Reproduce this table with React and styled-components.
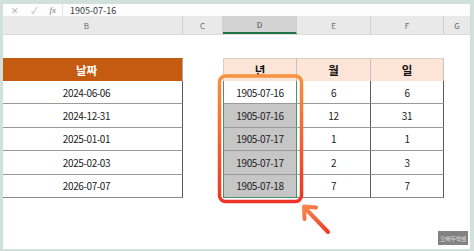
import React from 'react';
import styled, { createGlobalStyle } from 'styled-components';

const GlobalStyle = createGlobalStyle`
  html, body {
    margin: 0;
    padding: 0;
    background: #fff;
  }
  body {
    font-family: 'Noto Sans CJK KR', 'Noto Sans', sans-serif;
  }
`;

// column B runs off the left edge of the screenshot
const COLS = '192px 40px 74px 74px 73px 26px';

const Frame = styled.div`
  position: relative;
  width: 474px;
  height: 251px;
  box-sizing: border-box;
  border-style: solid;
  border-color: #cfe1da;
  border-width: 4px 4px 2px 3px;
  background: #fff;
  display: flex;
  flex-direction: column;
  overflow: hidden;
`;

const Viewport = styled.div`
  flex: 1;
  display: flex;
  flex-direction: column;
  overflow: hidden;
`;

const FormulaBar = styled.div`
  height: 12px;
  display: flex;
  align-items: center;
  background: #fdfdfd;
  font-size: 9px;
  color: #333;
`;

const FxTools = styled.div`
  width: 60px;
  display: flex;
  align-items: center;
  justify-content: space-around;
  padding-left: 2px;
  color: #b5b5b5;
  border-right: 1px solid #e2e2e2;
  height: 100%;
  box-sizing: border-box;
  > span {
    font-size: 9px;
    line-height: 1;
  }
  > i {
    font-family: 'Liberation Serif', serif;
    color: #7a7a7a;
    font-size: 9px;
  }
`;

const FormulaText = styled.span`
  padding-left: 7px;
  font-size: 9px;
  color: #3a3a3a;
`;

const ColHeaders = styled.div`
  display: grid;
  grid-template-columns: ${COLS};
  margin-left: -12px;
  height: 19px;
  background: #e9e9e9;
  border-bottom: 1px solid #dcdcdc;
  box-sizing: border-box;
`;

const ColHead = styled.div`
  display: flex;
  align-items: center;
  justify-content: center;
  font-size: 8px;
  color: ${(p) => (p.$active ? '#4a4a4a' : '#6d6d6d')};
  background: ${(p) => (p.$active ? '#d3d3d3' : 'transparent')};
  border-right: 1px solid #d0d0d0;
  border-bottom: ${(p) => (p.$active ? '2px solid #217346' : 'none')};
  box-sizing: border-box;
  &:last-child {
    border-right: none;
  }
`;

const Sheet = styled.div`
  flex: 1;
  display: grid;
  grid-template-columns: ${COLS};
  margin-left: -12px;
  align-content: start;
  padding-top: 23px;
`;

const Table = styled.div`
  display: grid;
  grid-template-columns: ${(p) => p.$cols};
  grid-template-rows: 23px repeat(5, 23.4px);
  grid-column: ${(p) => p.$col};
`;

const HeadCell = styled.div`
  display: flex;
  align-items: center;
  justify-content: center;
  font-weight: 700;
  font-size: 11.5px;
  box-sizing: border-box;
  color: ${(p) => (p.$dark ? '#fff' : '#111')};
  background: ${(p) => (p.$dark ? '#c55a11' : '#fce4d6')};
  border-right: 1px solid ${(p) => (p.$dark ? '#a9a9a9' : '#c9c0bb')};
  border-top: 1px solid ${(p) => (p.$dark ? '#c55a11' : '#d9cfc9')};
  border-left: ${(p) => (p.$first && !p.$dark ? '1px solid #d9cfc9' : 'none')};
`;

const Cell = styled.div`
  display: flex;
  align-items: center;
  justify-content: center;
  font-size: 10px;
  letter-spacing: -0.4px;
  color: #222;
  box-sizing: border-box;
  background: ${(p) => (p.$sel ? '#c6c6c6' : '#fff')};
  border-bottom: 1px solid ${(p) => (p.$last ? '#8a8a8a' : '#9a9a9a')};
  border-right: 1px solid ${(p) => (p.$green ? '#3f9a6a' : '#5a5a5a')};
  border-left: ${(p) => (p.$green ? '1px solid #3f9a6a' : 'none')};
  ${(p) => p.$last && p.$green && 'border-bottom-color: #3f9a6a;'}
`;

const Callout = styled.svg`
  position: absolute;
  left: -3px;
  top: -4px;
  pointer-events: none;
`;

const Watermark = styled.div`
  position: absolute;
  left: 435px;
  top: 227px;
  width: 30px;
  height: 14px;
  background: #828282;
  color: #dcdcdc;
  font-size: 6px;
  display: flex;
  align-items: center;
  justify-content: center;
  letter-spacing: -0.3px;
`;

const dates = ['2024-06-06', '2024-12-31', '2025-01-01', '2025-02-03', '2026-07-07'];
const rows = [
  ['1905-07-16', '6', '6'],
  ['1905-07-16', '12', '31'],
  ['1905-07-17', '1', '1'],
  ['1905-07-17', '2', '3'],
  ['1905-07-18', '7', '7'],
];

const App = () => (
  <>
    <GlobalStyle />
    <Frame>
      <FormulaBar>
        <FxTools>
          <span>✕</span>
          <span>✓</span>
          <i>fx</i>
        </FxTools>
        <FormulaText>1905-07-16</FormulaText>
      </FormulaBar>
      <Viewport>
        <ColHeaders>
          <ColHead>B</ColHead>
          <ColHead>C</ColHead>
          <ColHead $active>D</ColHead>
          <ColHead>E</ColHead>
          <ColHead>F</ColHead>
          <ColHead>G</ColHead>
        </ColHeaders>
        <Sheet>
          <Table $cols="1fr" $col="1">
            <HeadCell $dark>날짜</HeadCell>
            {dates.map((d, i) => (
              <Cell key={d} $last={i === dates.length - 1}>
                {d}
              </Cell>
            ))}
          </Table>
          <Table $cols="74px 74px 73px" $col="3 / span 3">
            <HeadCell $first>년</HeadCell>
            <HeadCell>월</HeadCell>
            <HeadCell>일</HeadCell>
            {rows.map((r, i) =>
              r.map((v, j) => (
                <Cell
                  key={`${i}-${j}`}
                  $green={j === 0}
                  $sel={j === 0 && i > 0}
                  $last={i === rows.length - 1}
                >
                  {v}
                </Cell>
              ))
            )}
          </Table>
        </Sheet>
      </Viewport>
      <Callout width="474" height="251" viewBox="0 0 474 251">
        <defs>
          <linearGradient id="boxGrad" x1="0" y1="0" x2="0" y2="1">
            <stop offset="0" stopColor="#f7913f" />
            <stop offset="1" stopColor="#ee3426" />
          </linearGradient>
          <linearGradient id="arrowGrad" gradientUnits="userSpaceOnUse" x1="303" y1="206" x2="329" y2="233">
            <stop offset="0" stopColor="#f98a4c" />
            <stop offset="1" stopColor="#ee3a2b" />
          </linearGradient>
        </defs>
        <rect x="219.5" y="76" width="82" height="125.5" rx="6" fill="none" stroke="url(#boxGrad)" strokeWidth="3.5" />
        <g stroke="url(#arrowGrad)" strokeWidth="4" strokeLinecap="round" fill="none">
          <line x1="328" y1="232" x2="305" y2="208" />
          <polyline points="316,207.5 304,206.5 304.5,219" strokeLinejoin="round" />
        </g>
      </Callout>
      <Watermark>오빠두엑셀</Watermark>
    </Frame>
  </>
);

export default App;
